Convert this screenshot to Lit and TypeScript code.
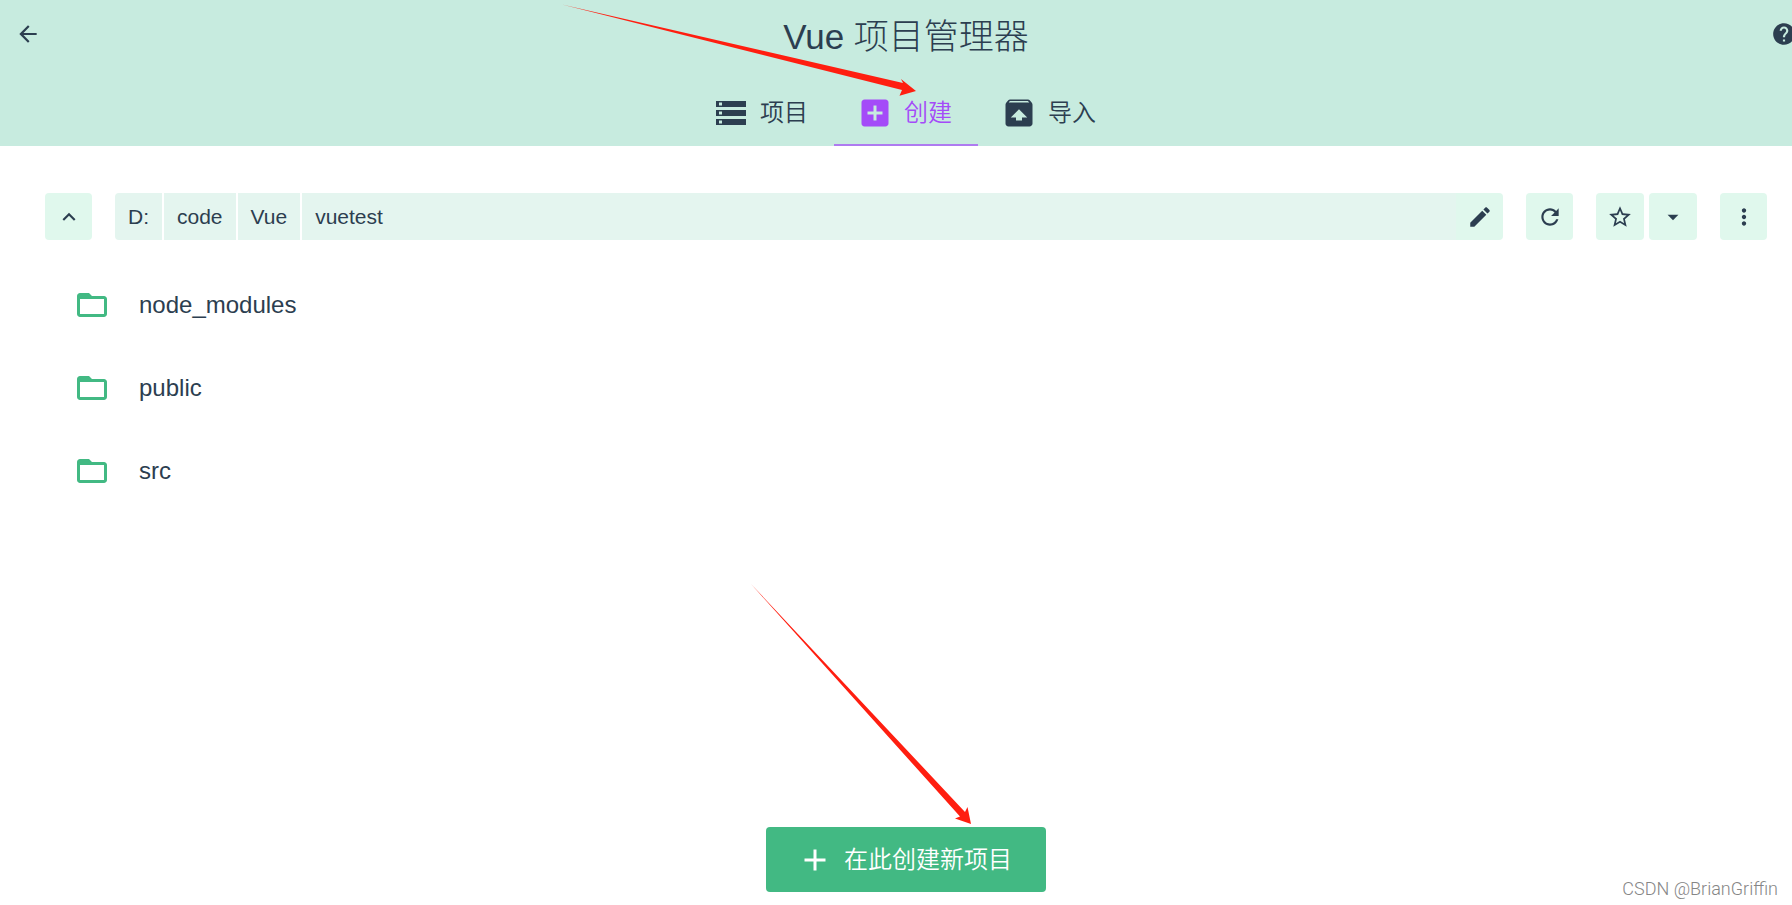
import { LitElement, html, css, svg } from "lit";
import { customElement, property } from "lit/decorators.js";

const ICONS: Record<string, string> = {
  back: "M20 11H7.83l5.59-5.59L12 4l-8 8 8 8 1.41-1.41L7.83 13H20v-2z",
  help: "M12 2C6.48 2 2 6.48 2 12s4.48 10 10 10 10-4.48 10-10S17.52 2 12 2zm1 17h-2v-2h2v2zm2.07-7.75l-.9.92C13.45 12.9 13 13.5 13 15h-2v-.5c0-1.1.45-2.1 1.17-2.83l1.24-1.26c.37-.36.59-.86.59-1.41 0-1.1-.9-2-2-2s-2 .9-2 2H8c0-2.21 1.79-4 4-4s4 1.79 4 4c0 .88-.36 1.68-.93 2.25z",
  storage: "M2 20h20v-4H2v4zm2-3h2v2H4v-2zM2 4v4h20V4H2zm4 3H4V5h2v2zm-4 7h20v-4H2v4zm2-3h2v2H4v-2z",
  addBox: "M19 3H5c-1.11 0-2 .9-2 2v14c0 1.1.89 2 2 2h14c1.1 0 2-.9 2-2V5c0-1.1-.9-2-2-2zm-2 10h-4v4h-2v-4H7v-2h4V7h2v4h4v2z",
  unarchive: "M20.55 5.22l-1.39-1.68C18.88 3.21 18.47 3 18 3H6c-.47 0-.88.21-1.15.55L3.46 5.22C3.17 5.57 3 6.01 3 6.5V19c0 1.1.89 2 2 2h14c1.1 0 2-.9 2-2V6.5c0-.49-.17-.93-.45-1.28zM12 9.5l5.5 5.5H14v2h-4v-2H6.5L12 9.5zM5.12 5l.82-1h12l.93 1H5.12z",
  up: "M7.41 15.41L12 10.83l4.59 4.58L18 14l-6-6-6 6z",
  edit: "M3 17.25V21h3.75L17.81 9.94l-3.75-3.75L3 17.25zM20.71 7.04c.39-.39.39-1.02 0-1.41l-2.34-2.34c-.39-.39-1.02-.39-1.41 0l-1.83 1.83 3.75 3.75 1.83-1.83z",
  refresh: "M17.65 6.35C16.2 4.9 14.21 4 12 4c-4.42 0-7.99 3.58-7.99 8s3.57 8 7.99 8c3.73 0 6.84-2.55 7.73-6h-2.08c-.82 2.33-3.04 4-5.65 4-3.31 0-6-2.69-6-6s2.69-6 6-6c1.66 0 3.14.69 4.22 1.78L13 11h7V4l-2.35 2.35z",
  star: "M22 9.24l-7.19-.62L12 2 9.19 8.63 2 9.24l5.46 4.73L5.82 21 12 17.27 18.18 21l-1.63-7.03L22 9.24zM12 15.4l-3.76 2.27 1-4.28-3.32-2.88 4.38-.38L12 6.1l1.71 4.04 4.38.38-3.32 2.88 1 4.28L12 15.4z",
  caret: "M7 10l5 5 5-5z",
  more: "M12 8c1.1 0 2-.9 2-2s-.9-2-2-2-2 .9-2 2 .9 2 2 2zm0 2c-1.1 0-2 .9-2 2s.9 2 2 2 2-.9 2-2-.9-2-2-2zm0 6c-1.1 0-2 .9-2 2s.9 2 2 2 2-.9 2-2-.9-2-2-2z",
  folder: "M20 6h-8l-2-2H4c-1.1 0-1.99.9-1.99 2L2 18c0 1.1.9 2 2 2h16c1.1 0 2-.9 2-2V8c0-1.1-.9-2-2-2zm0 12H4V8h16v10z",
  add: "M19 13h-6v6h-2v-6H5v-2h6V5h2v6h6v2z",
};

@customElement("ui-icon")
export class UiIcon extends LitElement {
  @property() name = "";

  static styles = css`
    :host {
      display: block;
      flex: none;
      width: 26px;
      height: 26px;
    }
    .glyph {
      display: block;
      width: 100%;
      height: 100%;
      fill: currentColor;
    }
  `;

  render() {
    return html`<svg class="glyph" viewBox="0 0 24 24" aria-hidden="true">
      ${svg`<path d=${ICONS[this.name] ?? ""}></path>`}
    </svg>`;
  }
}

@customElement("app-root")
export class AppRoot extends LitElement {
  private tabs = [
    { icon: "storage", label: "项目", active: false },
    { icon: "addBox", label: "创建", active: true },
    { icon: "unarchive", label: "导入", active: false },
  ];
  private path = ["D:", "code", "Vue", "vuetest"];
  private folders = ["node_modules", "public", "src"];

  static styles = css`
    :host {
      display: block;
      position: relative;
      height: 100vh;
      overflow: hidden;
      background: #fff;
      color: #2c3e50;
      font-family: "Liberation Sans", "Noto Sans CJK SC", sans-serif;
      font-size: 24px;
      line-height: 32px;
    }
    * {
      box-sizing: border-box;
    }
    button {
      border: 0;
      padding: 0;
      background: none;
      color: inherit;
      font: inherit;
      cursor: pointer;
    }
    a {
      color: inherit;
      text-decoration: none;
    }
    .shell {
      display: flex;
      flex-direction: column;
      width: calc(100% + 20px);
      height: 100%;
    }
    .header {
      background: #c7ebdf;
    }
    .topbar {
      display: flex;
      align-items: center;
      justify-content: space-between;
      height: 68px;
      padding: 0 15px;
    }
    .title {
      margin: 0;
      padding-top: 6px;
      font-size: 35px;
      line-height: 48px;
      font-weight: 300;
    }
    .tabs {
      display: flex;
      justify-content: center;
      height: 78px;
    }
    .tab {
      display: flex;
      align-items: center;
      gap: 11px;
      padding: 14px 26px 0 23px;
      font-weight: 350;
      border-bottom: 2px solid transparent;
    }
    .tab.active {
      color: #a44bf8;
      border-color: #ae7bf0;
    }
    .large {
      width: 36px;
      height: 36px;
    }
    .toolbar {
      display: flex;
      gap: 23px;
      padding: 47px 45px 23px;
    }
    .square {
      display: flex;
      flex: none;
      align-items: center;
      justify-content: center;
      width: 47px;
      height: 47px;
      border-radius: 4px;
      background: #e0f8ed;
    }
    .path {
      display: flex;
      flex: 1;
      gap: 2px;
      border-radius: 4px;
      overflow: hidden;
      font-size: 21px;
      line-height: 47px;
    }
    .crumb {
      padding: 0 13px;
      background: #e4f5ef;
    }
    .crumb.last {
      flex: 1;
    }
    .path .square {
      margin-left: -2px;
      border-radius: 0;
    }
    .pair {
      display: flex;
      gap: 5px;
    }
    .pair .square {
      width: 48px;
    }
    .folders {
      flex: 1;
      margin: 0;
      padding: 0 74px;
      list-style: none;
    }
    .folder {
      display: flex;
      align-items: center;
      gap: 29px;
      height: 83px;
    }
    .folder .large {
      color: #42b983;
    }
    .actions {
      display: flex;
      justify-content: center;
      padding-bottom: 13px;
    }
    .create {
      display: flex;
      align-items: center;
      gap: 11px;
      height: 65px;
      padding: 0 34px 0 31px;
      border-radius: 4px;
      background: #42b983;
      color: #fff;
      font-weight: 350;
    }
    .arrows {
      position: absolute;
      left: 0;
      top: 0;
      width: 1792px;
      height: 905px;
      pointer-events: none;
    }
    .watermark {
      position: absolute;
      right: 14px;
      bottom: 6px;
      font-family: Roboto, sans-serif;
      font-size: 18px;
      line-height: 20px;
      font-weight: 300;
      color: #868686;
    }
  `;

  render() {
    return html`
      <div class="shell">
        <header class="header">
          <div class="topbar">
            <button aria-label="返回"><ui-icon name="back"></ui-icon></button>
            <h1 class="title">Vue 项目管理器</h1>
            <button aria-label="帮助"><ui-icon name="help"></ui-icon></button>
          </div>
          <nav class="tabs">
            ${this.tabs.map(
              (t) => html`<a class="tab ${t.active ? "active" : ""}" href="#">
                <ui-icon class="large" name=${t.icon}></ui-icon><span>${t.label}</span>
              </a>`
            )}
          </nav>
        </header>
        <div class="toolbar">
          <button class="square" aria-label="上级目录"><ui-icon name="up"></ui-icon></button>
          <div class="path">
            ${this.path.map(
              (p, i) =>
                html`<a class="crumb ${i === this.path.length - 1 ? "last" : ""}" href="#">${p}</a>`
            )}
            <button class="square" aria-label="编辑路径"><ui-icon name="edit"></ui-icon></button>
          </div>
          <button class="square" aria-label="刷新"><ui-icon name="refresh"></ui-icon></button>
          <div class="pair">
            <button class="square" aria-label="收藏"><ui-icon name="star"></ui-icon></button>
            <button class="square" aria-label="收藏列表"><ui-icon name="caret"></ui-icon></button>
          </div>
          <button class="square" aria-label="更多"><ui-icon name="more"></ui-icon></button>
        </div>
        <ul class="folders">
          ${this.folders.map(
            (f) => html`<li class="folder">
              <ui-icon class="large" name="folder"></ui-icon><span>${f}</span>
            </li>`
          )}
        </ul>
        <div class="actions">
          <button class="create">
            <ui-icon class="large" name="add"></ui-icon><span>在此创建新项目</span>
          </button>
        </div>
      </div>
      <svg class="arrows" viewBox="0 0 1792 905" fill="#ff1e10" aria-hidden="true">
        <path d="M562 4.500L903 83 901 79 916 91 899.500 95.700 902 90Z"></path>
        <path d="M751 584L965 812 967.500 807 971 824 955 818.500 960 816.500Z"></path>
      </svg>
      <div class="watermark">CSDN @BrianGriffin</div>
    `;
  }
}
